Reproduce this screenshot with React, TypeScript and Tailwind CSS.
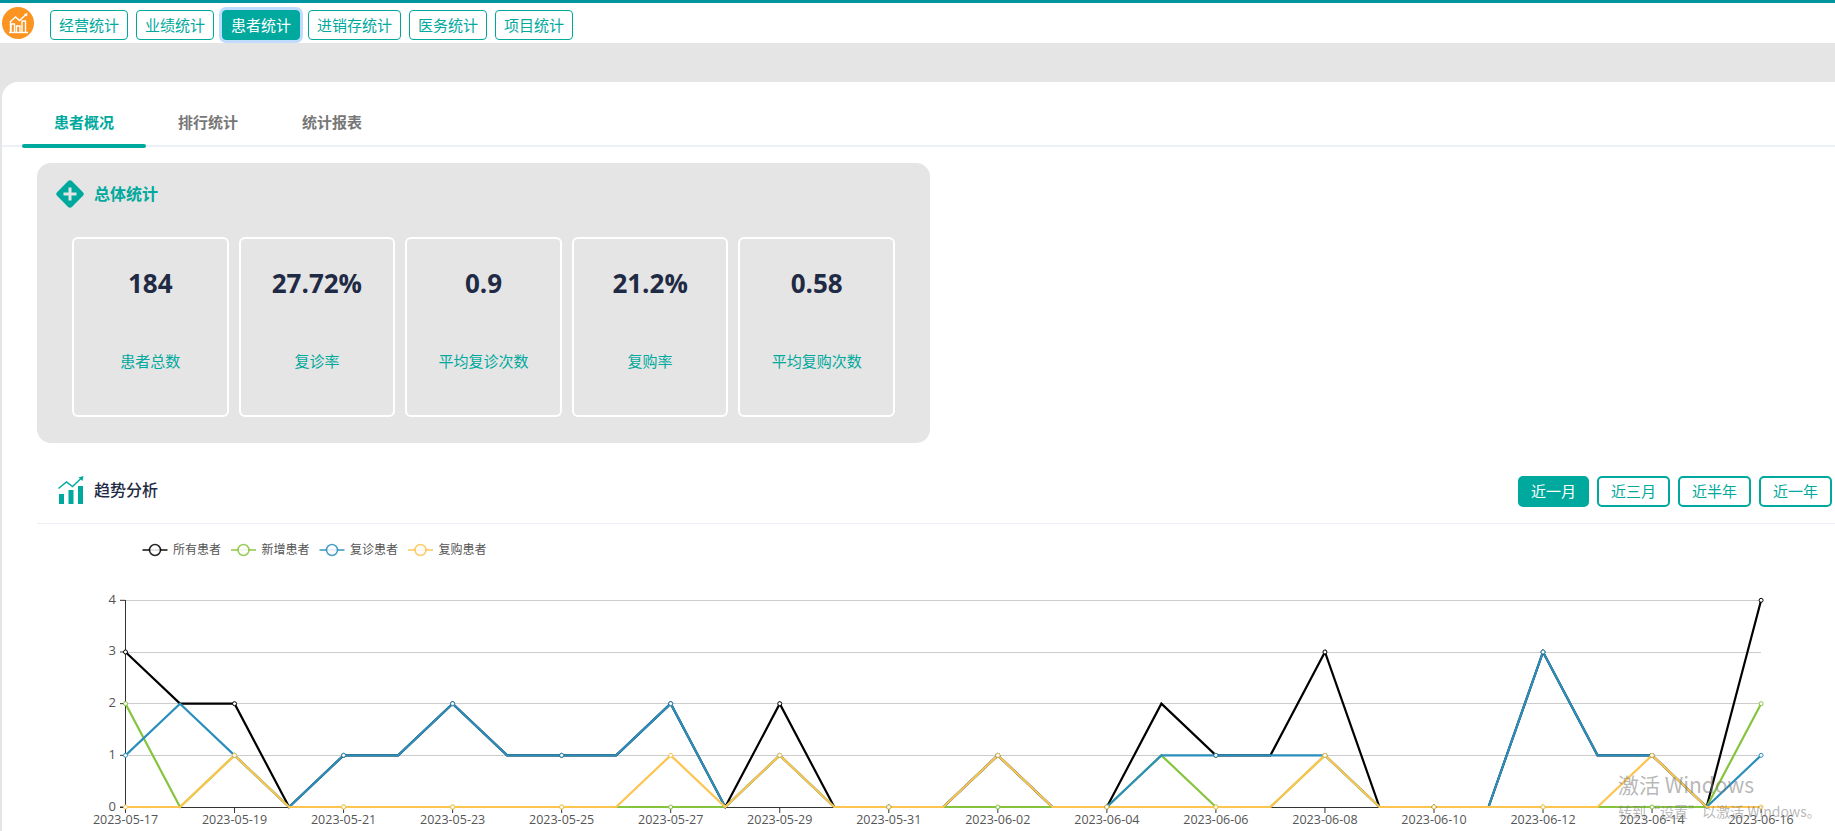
const TEAL = "#00a99d";

const navItems = ["经营统计", "业绩统计", "患者统计", "进销存统计", "医务统计", "项目统计"];
const tabs = ["患者概况", "排行统计", "统计报表"];
const ranges = ["近一月", "近三月", "近半年", "近一年"];
const stats = [
    { value: "184", label: "患者总数" },
    { value: "27.72%", label: "复诊率" },
    { value: "0.9", label: "平均复诊次数" },
    { value: "21.2%", label: "复购率" },
    { value: "0.58", label: "平均复购次数" },
];

const dates = [
    "2023-05-17", "2023-05-19", "2023-05-21", "2023-05-23", "2023-05-25", "2023-05-27", "2023-05-29", "2023-05-31",
    "2023-06-02", "2023-06-04", "2023-06-06", "2023-06-08", "2023-06-10", "2023-06-12", "2023-06-14", "2023-06-16",
];

const series = [
    { name: "所有患者", color: "#000000", legendX: 155, data: [3, 2, 2, 0, 1, 1, 2, 1, 1, 1, 2, 0, 2, 0, 0, 0, 1, 0, 0, 2, 1, 1, 3, 0, 0, 0, 3, 1, 1, 0, 4] },
    { name: "新增患者", color: "#85c43c", legendX: 243.5, data: [2, 0, 1, 0, 0, 0, 0, 0, 0, 0, 0, 0, 1, 0, 0, 0, 0, 0, 0, 1, 0, 0, 1, 0, 0, 0, 0, 0, 0, 0, 2] },
    { name: "复诊患者", color: "#2b8fbd", legendX: 332, data: [1, 2, 1, 0, 1, 1, 2, 1, 1, 1, 2, 0, 1, 0, 0, 0, 1, 0, 0, 1, 1, 1, 1, 0, 0, 0, 3, 1, 1, 0, 1] },
    { name: "复购患者", color: "#fdc44f", legendX: 420.5, data: [0, 0, 1, 0, 0, 0, 0, 0, 0, 0, 1, 0, 1, 0, 0, 0, 1, 0, 0, 0, 0, 0, 1, 0, 0, 0, 0, 0, 1, 0, 0] },
];

const gridYs = [600.5, 652.5, 703.5, 755.5];

const px = (i: number) => 125.5 + i * 54.52;
const py = (v: number) => 807 - v * 51.67;

function TrendChart() {
    return (
        <svg viewBox="37 524 1798 307" className="block w-[1798px] h-[307px]" style={{ fontFamily: "'Open Sans', sans-serif" }}>
            {/* legend */}
            {series.map((s) => (
                <g key={s.name}>
                    <line x1={s.legendX - 12.5} x2={s.legendX + 12.5} y1={550} y2={550} stroke={s.color} strokeWidth={2} opacity={0.7} />
                    <circle cx={s.legendX} cy={550} r={5.5} fill="#fff" stroke={s.color} strokeWidth={1.5} opacity={0.85} />
                    <text x={s.legendX + 18} y={554} fontSize={12} fill="#555" style={{ fontFamily: "'Noto Sans CJK SC', sans-serif" }}>
                        {s.name}
                    </text>
                </g>
            ))}

            {/* grid */}
            {gridYs.map((y) => (
                <line key={y} x1={125} x2={1761} y1={y} y2={y} stroke="#cccccc" strokeWidth={1} />
            ))}

            {/* axes */}
            <line x1={125.5} x2={125.5} y1={600} y2={813} stroke="#333" strokeWidth={1} />
            <line x1={120} x2={1761} y1={807.5} y2={807.5} stroke="#333" strokeWidth={1} />
            {[0, 1, 2, 3, 4].map((v) => (
                <g key={v}>
                    <line x1={120} x2={125} y1={py(v)} y2={py(v)} stroke="#333" strokeWidth={1} />
                    <text x={116} y={py(v) + 3.5} fontSize={13} textAnchor="end" fill="#555">
                        {v}
                    </text>
                </g>
            ))}
            {dates.map((d, i) => (
                <g key={d}>
                    <line x1={px(i * 2)} x2={px(i * 2)} y1={807.5} y2={813} stroke="#333" strokeWidth={1} />
                    <text x={px(i * 2)} y={824} fontSize={12.5} textAnchor="middle" fill="#555">
                        {d}
                    </text>
                </g>
            ))}

            {/* lines */}
            {series.map((s) => (
                <polyline
                    key={s.name}
                    points={s.data.map((v, i) => `${px(i)},${py(v)}`).join(" ")}
                    fill="none"
                    stroke={s.color}
                    strokeWidth={2.2}
                />
            ))}
            {series.map((s) =>
                s.data.map((v, i) =>
                    i % 2 === 0 ? <circle key={s.name + i} cx={px(i)} cy={py(v)} r={2} fill="#fff" stroke={s.color} strokeWidth={1} /> : null
                )
            )}
        </svg>
    );
}

function Logo() {
    return (
        <svg viewBox="0 0 32 32" className="w-8 h-8 shrink-0">
            <circle cx="16" cy="16" r="16" fill="#fb9420" />
            <g fill="none" stroke="#fff" strokeWidth="1.4">
                <path d="M7 25.500h19" />
                <path d="M8.500 14v11.500" />
                <path d="M9 25v-8h3.500v8M14.500 25v-6h3.500v6M20 25v-11h3.500v11" />
                <path d="M8 15l5.500-5 4 3.500 6.500-6" />
            </g>
            <path d="M22 7l3.500-1-.5 3.500z" fill="#fff" />
        </svg>
    );
}

function DiamondIcon() {
    return (
        <svg viewBox="0 0 28 28" className="w-7 h-7 shrink-0 -ml-[1px]">
            <rect x="3.500" y="3.500" width="21" height="21" rx="3" fill={TEAL} transform="rotate(45 14 14)" />
            <path d="M14 7.500v13M7.500 14h13" stroke="#e5e5e5" strokeWidth="3" />
        </svg>
    );
}

function TrendIcon() {
    return (
        <svg viewBox="0 0 26 28" className="w-[26px] h-7 shrink-0 -mt-[2px]">
            <path d="M1 18h5v10H1zM10.500 14h5v14h-5zM20 10h5v18h-5z" fill={TEAL} />
            <path d="M0.500 12.500L8.500 6l6 4.500L23 2.500" fill="none" stroke={TEAL} strokeWidth="1.400" />
            <path d="M20.500 1.500L25.500 0l-1 5z" fill={TEAL} />
        </svg>
    );
}

export default function App() {
    return (
        <div className="h-screen overflow-hidden bg-[#e5e5e5] font-['Noto_Sans_CJK_SC',sans-serif] relative">
            <header className="h-[43px] bg-white border-t-[3px] border-[#00949e] pl-[2px] pt-[4px] flex items-start">
                <Logo />
                <nav className="ml-4 mt-[3px] flex gap-2">
                    {navItems.map((item) => (
                        <button
                            key={item}
                            className={`h-[30px] px-2 pb-[2px] rounded-[4px] border border-[#00a99d] text-[15px] leading-none ${item === "患者统计" ? "bg-[#00a99d] text-white ring-[3px] ring-[#bfdbfe]" : "bg-white text-[#00a99d]"}`}
                        >
                            {item}
                        </button>
                    ))}
                </nav>
            </header>

            <main className="mt-[39px] ml-[2px] bg-white rounded-tl-[16px] h-[749px]">
                <div className="pt-[28px] pl-5 flex h-[65px] border-b-2 border-[#eef0f8]">
                    {tabs.map((tab, i) => (
                        <div key={tab} className="w-[124px] h-[38px] flex flex-col">
                            <span className={`h-[34px] leading-6 text-center text-[15px] font-bold ${i === 0 ? "text-[#00a99d]" : "text-[#777777]"}`}>{tab}</span>
                            {i === 0 && <div className="h-1 rounded-full bg-[#00a99d]" />}
                        </div>
                    ))}
                </div>

                <section className="mt-4 ml-[35px] w-[893px] h-[280px] bg-[#e5e5e5] rounded-[14px] px-[35px]">
                    <div className="h-[74px] pt-[17px] flex items-start -ml-[15px]">
                        <DiamondIcon />
                        <h2 className="ml-[10px] -mt-[1px] text-[16px] leading-7 font-bold text-[#00a99d]">总体统计</h2>
                    </div>
                    <div className="grid grid-cols-5 gap-[10px]">
                        {stats.map((s) => (
                            <div key={s.label} className="h-[180px] rounded-[6px] border-2 border-white text-center">
                                <div className="mt-[24px] h-[40px] leading-[40px] text-[26px] font-bold text-[#1f2a44] font-['Open_Sans',sans-serif]">{s.value}</div>
                                <div className="mt-[46px] text-[15px] leading-6 text-[#00a99d]">{s.label}</div>
                            </div>
                        ))}
                    </div>
                </section>

                <section className="ml-[35px]">
                    <div className="h-[81px] pt-[16px] pr-[3px] border-b border-[#eef0f8] flex items-center justify-between">
                        <div className="flex items-center pl-[21px]">
                            <TrendIcon />
                            <h2 className="ml-[10px] pb-[4px] text-[16px] font-medium text-[#1f2a44]">趋势分析</h2>
                        </div>
                        <div className="flex gap-2">
                            {ranges.map((r, i) => (
                                <button
                                    key={r}
                                    className={`h-[31px] pb-[2px] rounded-[5px] border-2 border-[#00a99d] text-[15px] leading-none ${i === 0 ? "w-[71px] bg-[#00a99d] text-white" : "w-[73px] bg-white text-[#00a99d]"}`}
                                >
                                    {r}
                                </button>
                            ))}
                        </div>
                    </div>
                    <TrendChart />
                </section>
            </main>

            {/* windows activation watermark */}
            <div className="absolute left-[1618px] top-[770px] text-[#7a7a7a]/55 pointer-events-none whitespace-nowrap">
                <div className="text-[21px] leading-7">激活 Windows</div>
                <div className="text-[14px] leading-[18px] mt-1">转到“设置”以激活 Windows。</div>
            </div>
        </div>
    );
}
